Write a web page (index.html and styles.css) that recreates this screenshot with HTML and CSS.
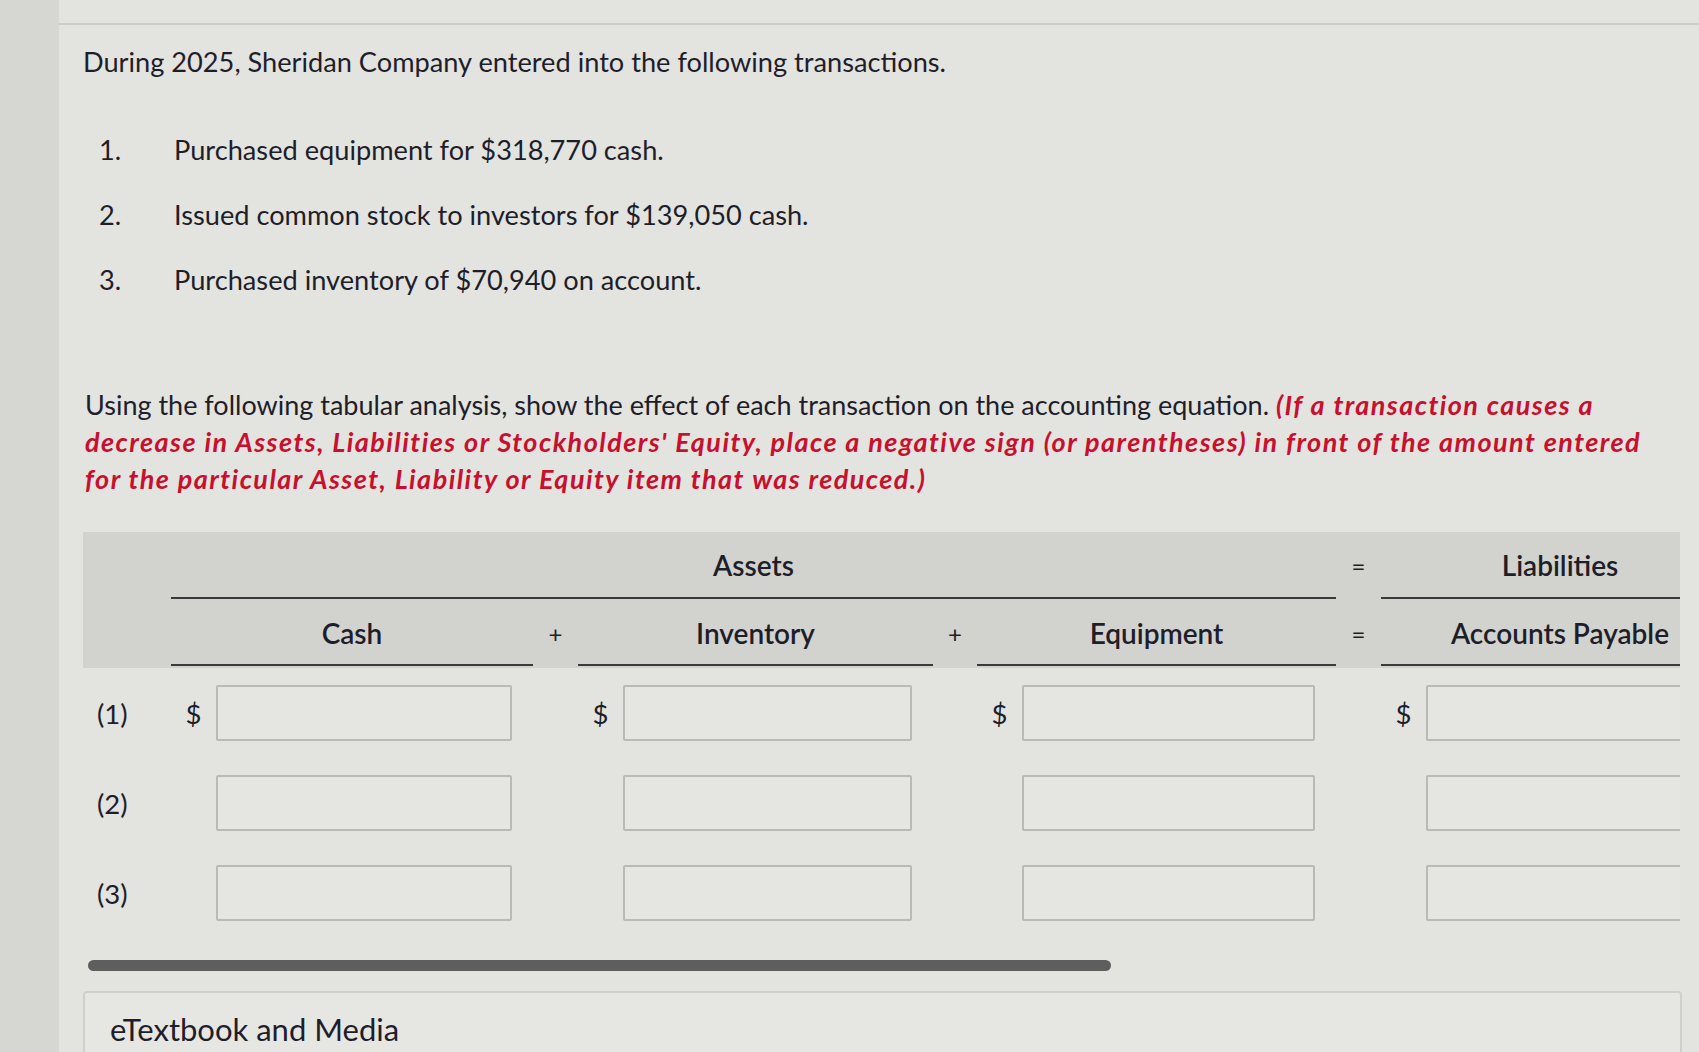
FILE: index.html
```html
<!DOCTYPE html>
<html lang="en">
<head>
<meta charset="utf-8">
<title>Sheridan Company</title>
<link rel="stylesheet" href="styles.css">
</head>
<body>
<div class="page">
  <div class="edge"></div>
  <main class="content">
    <p class="title">During 2025, Sheridan Company entered into the following transactions.</p>
    <ol class="tx">
      <li><span class="num">1.</span><span>Purchased equipment for $318,770 cash.</span></li>
      <li><span class="num">2.</span><span>Issued common stock to investors for $139,050 cash.</span></li>
      <li><span class="num">3.</span><span>Purchased inventory of $70,940 on account.</span></li>
    </ol>
    <p class="instr">Using the following tabular analysis, show the effect of each transaction on the accounting equation. <em class="warn">(If a transaction causes a<br>decrease in Assets, Liabilities or Stockholders' Equity, place a negative sign (or parentheses) in front of the amount entered<br>for the particular Asset, Liability or Equity item that was reduced.)</em></p>

    <div class="scroller">
      <div class="table">
        <div class="band">
          <div class="h1 blank"></div>
          <div class="h1 assets"><span>Assets</span></div>
          <div class="h1 op">=</div>
          <div class="h1 liab"><span>Liabilities</span></div>

          <div class="h2 blank"></div>
          <div class="h2 col">Cash</div>
          <div class="h2 op">+</div>
          <div class="h2 col">Inventory</div>
          <div class="h2 op">+</div>
          <div class="h2 col">Equipment</div>
          <div class="h2 op">=</div>
          <div class="h2 col">Accounts Payable</div>
        </div>

        <div class="rows">
          <div class="lbl">(1)</div>
          <div class="cell"><span class="cur">$</span><span class="inp"></span></div>
          <div></div>
          <div class="cell"><span class="cur">$</span><span class="inp"></span></div>
          <div></div>
          <div class="cell"><span class="cur">$</span><span class="inp"></span></div>
          <div></div>
          <div class="cell"><span class="cur">$</span><span class="inp"></span></div>

          <div class="lbl">(2)</div>
          <div class="cell"><span class="cur"></span><span class="inp"></span></div>
          <div></div>
          <div class="cell"><span class="cur"></span><span class="inp"></span></div>
          <div></div>
          <div class="cell"><span class="cur"></span><span class="inp"></span></div>
          <div></div>
          <div class="cell"><span class="cur"></span><span class="inp"></span></div>

          <div class="lbl">(3)</div>
          <div class="cell"><span class="cur"></span><span class="inp"></span></div>
          <div></div>
          <div class="cell"><span class="cur"></span><span class="inp"></span></div>
          <div></div>
          <div class="cell"><span class="cur"></span><span class="inp"></span></div>
          <div></div>
          <div class="cell"><span class="cur"></span><span class="inp"></span></div>
        </div>
      </div>
    </div>

    <div class="scrollbar"></div>

    <section class="media">eTextbook and Media</section>
  </main>
</div>
</body>
</html>
```

FILE: styles.css
```css
* { box-sizing: border-box; }

html, body {
  margin: 0;
  padding: 0;
  height: 100%;
  overflow: hidden;
}

body {
  background: #e3e3df;
  font-family: Lato, "Noto Sans", sans-serif;
  color: #1e1e2a;
}

.page {
  display: flex;
  min-height: 100%;
}

.edge {
  width: 59px;
  flex: none;
  background: #d6d6d2;
}

.content {
  flex: 1;
  margin-top: 23px;
  border-top: 2px solid #cbcbc7;
  padding-left: 24px;
}

.title {
  margin: 21px 0 0;
  font-size: 27.2px;
  line-height: 32px;
}

.tx {
  list-style: none;
  margin: 56px 0 0;
  padding: 0 0 0 16px;
}

.tx li {
  display: flex;
  font-size: 27.2px;
  line-height: 32px;
  height: 65px;
}

.tx .num {
  width: 75px;
  flex: none;
}

.instr {
  margin: 57px 0 0;
  padding-left: 2px;
  font-size: 27px;
  line-height: 37px;
  white-space: nowrap;
}

.warn {
  color: #c8102e;
  font-weight: 700;
  font-style: italic;
  letter-spacing: 1.45px;
}

.scroller {
  margin-top: 35px;
  width: 1597px;
  overflow: hidden;
}

.table {
  width: 1760px;
}

.band,
.rows {
  display: grid;
  grid-template-columns: 88px 362px 45px 355px 44px 359px 45px 358px;
}

.band {
  background: #d2d2ce;
  font-size: 28px;
  font-weight: 600;
}

.h1 {
  height: 67px;
  display: flex;
  align-items: center;
  justify-content: center;
}

.h1.assets {
  grid-column: 2 / span 5;
  border-bottom: 2px solid #3a3a3e;
}

.h1.liab {
  border-bottom: 2px solid #3a3a3e;
}

.h2 {
  height: 67px;
  display: flex;
  align-items: center;
  justify-content: center;
  padding-top: 2px;
}

.h2.col {
  border-bottom: 2px solid #3a3a3e;
}

.op {
  font-weight: 400;
  font-size: 24px;
}

.h2.blank { height: 69px; }

.rows {
  margin-top: 17px;
  row-gap: 34px;
  font-size: 27.5px;
}

.lbl {
  padding-left: 14px;
  display: flex;
  align-items: center;
}

.cell {
  display: flex;
  align-items: center;
  padding-right: 21px;
}

.cur {
  width: 45px;
  flex: none;
  text-align: center;
}

.inp {
  flex: 1;
  height: 56px;
  border: 2px solid #b9b9b5;
  border-radius: 2px;
  background: #e5e5e1;
}

.scrollbar {
  margin: 39px 0 0 5px;
  width: 1023px;
  height: 11px;
  border-radius: 6px;
  background: #5e5e5e;
}

.media {
  margin-top: 20px;
  width: 1599px;
  height: 80px;
  border: 2px solid #cfcfcb;
  border-bottom: none;
  border-radius: 4px 4px 0 0;
  background: #e6e6e2;
  padding: 17px 0 0 25px;
  font-size: 31px;
  line-height: 38px;
}
```
